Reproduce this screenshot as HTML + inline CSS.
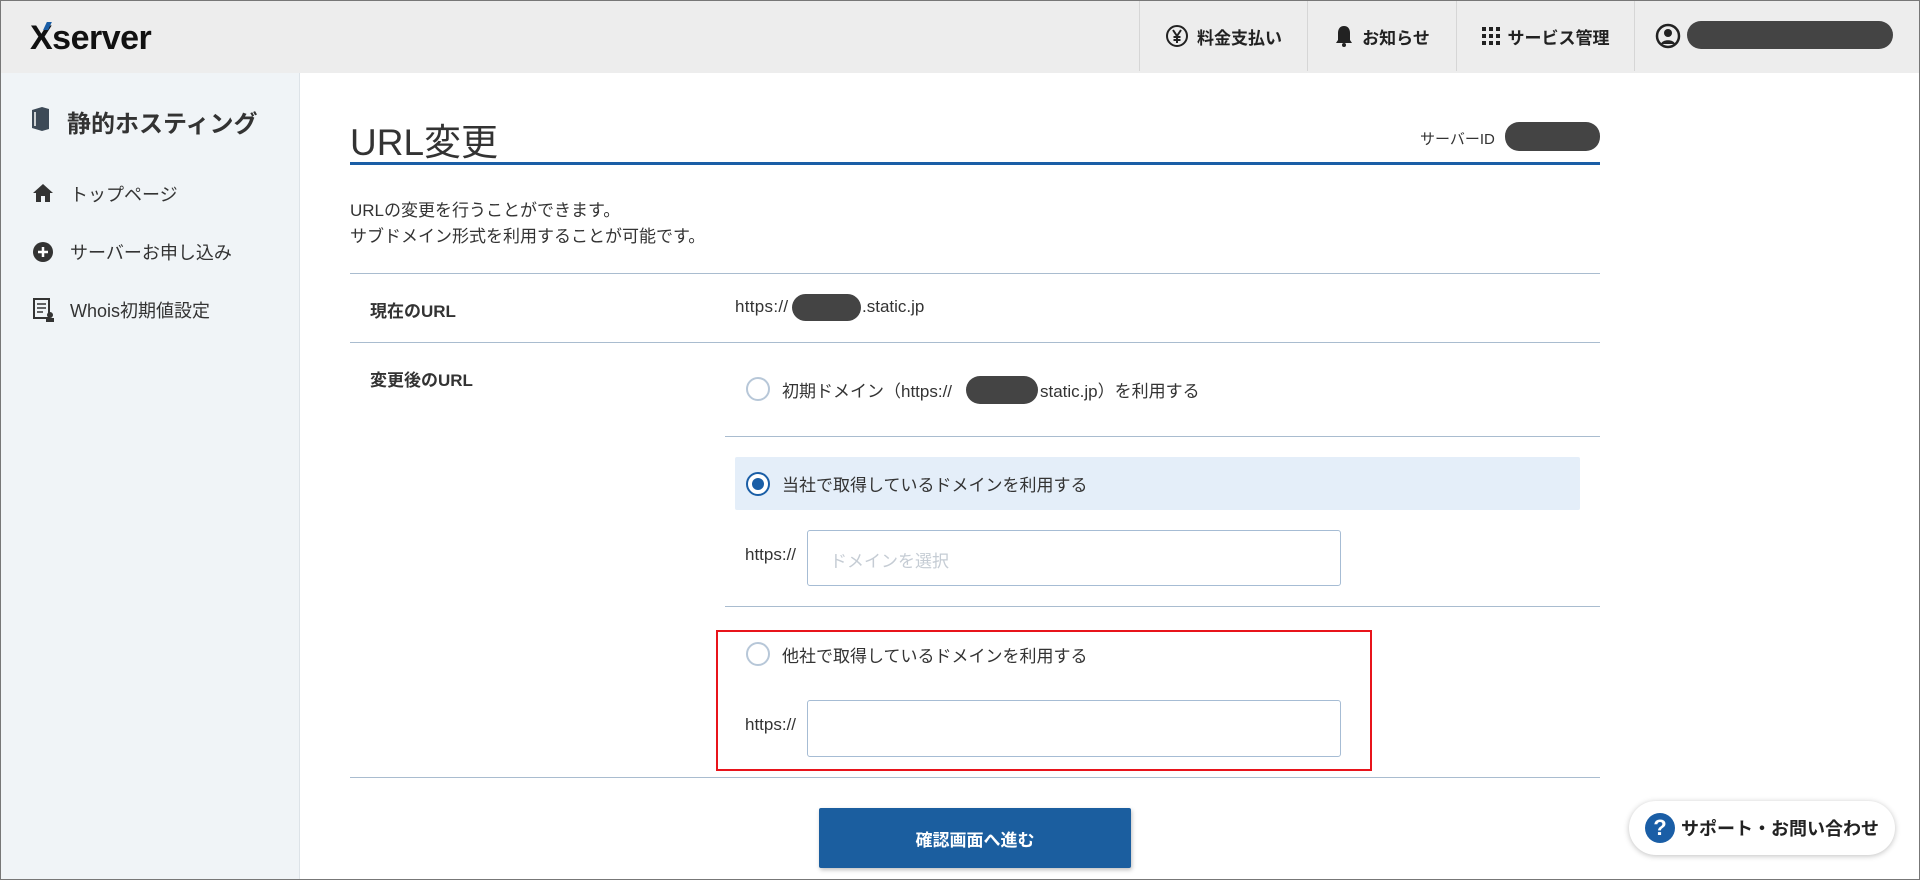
<!DOCTYPE html>
<html><head><meta charset="utf-8"><style>
*{box-sizing:border-box;margin:0;padding:0}
body{width:1920px;height:880px;position:relative;overflow:hidden;background:#fff;font-family:"Liberation Sans","Noto Sans CJK JP",sans-serif;color:#333}
.a{position:absolute}
.hdr{left:0;top:0;width:1920px;height:73px;background:#ededed;border:1px solid #777;border-bottom:none}
.nav{top:1px;height:70px;display:flex;align-items:center;justify-content:center;font-size:17px;font-weight:bold;color:#222;border-left:1px solid #d6d6d6}
.side{left:1px;top:73px;width:299px;height:807px;background:#f0f4f7;border-right:1px solid #dde3e8}
.mi{left:70px;font-size:18px;color:#333}
.pill{background:#444;border-radius:14px}
.line{height:1px;background:#a9bccf}
.radio{width:24px;height:24px;border:2px solid #b7c7d8;border-radius:50%;background:#fff}
.lbl{font-size:17px;color:#333}
.inp{border:1px solid #a6bcd4;border-radius:3px;background:#fff}
</style></head><body>
<div class="a hdr"></div>
<div class="a" style="left:30px;top:19px;font-size:34px;font-weight:bold;color:#111;letter-spacing:-0.5px">Xserver</div>
<div class="a" style="left:45px;top:22px;width:5px;height:8px;background:#1a5ea6;transform:skewX(-25deg)"></div>
<div class="a nav" style="left:1139px;width:168px"><svg width="24" height="24" viewBox="0 0 24 24" style="margin-right:8px"><circle cx="12" cy="12" r="10" fill="none" stroke="#222" stroke-width="2"/><path d="M8 6l4 6 4-6M12 12v7M8.5 13h7M8.5 16h7" stroke="#222" stroke-width="2" fill="none"/></svg>料金支払い</div>
<div class="a nav" style="left:1307px;width:149px"><svg width="20" height="24" viewBox="0 0 20 24" style="margin-right:8px"><path d="M10 2c-4 0-6 3-6 7v7l-2 3h16l-2-3V9c0-4-2-7-6-7z" fill="#222"/><circle cx="10" cy="21" r="2" fill="#222"/></svg>お知らせ</div>
<div class="a nav" style="left:1456px;width:178px"><svg width="18" height="18" viewBox="0 0 18 18" style="margin-right:8px" fill="#222"><rect x="0" y="0" width="4" height="4"/><rect x="7" y="0" width="4" height="4"/><rect x="14" y="0" width="4" height="4"/><rect x="0" y="7" width="4" height="4"/><rect x="7" y="7" width="4" height="4"/><rect x="14" y="7" width="4" height="4"/><rect x="0" y="14" width="4" height="4"/><rect x="7" y="14" width="4" height="4"/><rect x="14" y="14" width="4" height="4"/></svg>サービス管理</div>
<div class="a nav" style="left:1634px;width:285px;justify-content:flex-start;padding-left:20px"><svg width="26" height="26" viewBox="0 0 26 26"><circle cx="13" cy="13" r="11" fill="none" stroke="#222" stroke-width="2.5"/><circle cx="13" cy="10" r="4" fill="#222"/><path d="M6 21c1-5 13-5 14 0" fill="#222"/></svg></div>
<div class="a pill" style="left:1687px;top:21px;width:206px;height:28px"></div>

<div class="a side"></div>
<svg class="a" style="left:30px;top:106px" width="20" height="26" viewBox="0 0 20 26"><path d="M2 4l10-3 7 2v20l-7 2-10-3z" fill="#3d4a57"/><path d="M5 6v14" stroke="#fff" stroke-width="1.5"/></svg>
<div class="a" style="left:67px;top:104px;font-size:24px;font-weight:bold;color:#333">静的ホスティング</div>
<svg class="a" style="left:32px;top:182px" width="22" height="22" viewBox="0 0 22 22"><path d="M11 2L1 11h3v9h5v-6h4v6h5v-9h3z" fill="#333"/></svg>
<div class="a mi" style="top:181px">トップページ</div>
<svg class="a" style="left:32px;top:241px" width="22" height="22" viewBox="0 0 22 22"><circle cx="11" cy="11" r="10" fill="#333"/><path d="M11 6v10M6 11h10" stroke="#fff" stroke-width="2.5"/></svg>
<div class="a mi" style="top:239px">サーバーお申し込み</div>
<svg class="a" style="left:33px;top:298px" width="22" height="24" viewBox="0 0 22 24"><rect x="1" y="1" width="15" height="19" fill="none" stroke="#333" stroke-width="2"/><path d="M4 6h9M4 10h9M4 14h6" stroke="#333" stroke-width="1.5"/><circle cx="17" cy="17" r="3" fill="#333"/><rect x="13" y="20" width="8" height="4" fill="#333"/></svg>
<div class="a mi" style="top:297px">Whois初期値設定</div>

<div class="a" style="left:350px;top:112px;font-size:37px;color:#333">URL変更</div>
<div class="a" style="left:1420px;top:128px;font-size:15px;color:#333">サーバーID</div>
<div class="a pill" style="left:1505px;top:122px;width:95px;height:29px"></div>
<div class="a" style="left:350px;top:162px;width:1250px;height:3px;background:#1a5ea6"></div>
<div class="a" style="left:350px;top:198px;font-size:17px;line-height:26px;color:#333">URLの変更を行うことができます。<br>サブドメイン形式を利用することが可能です。</div>
<div class="a line" style="left:350px;top:273px;width:1250px"></div>
<div class="a" style="left:370px;top:297px;font-size:17px;font-weight:bold">現在のURL</div>
<div class="a lbl" style="left:735px;top:297px;letter-spacing:0.3px">https://</div>
<div class="a pill" style="left:792px;top:294px;width:69px;height:27px"></div>
<div class="a lbl" style="left:862px;top:297px">.static.jp</div>
<div class="a line" style="left:350px;top:342px;width:1250px"></div>
<div class="a" style="left:370px;top:366px;font-size:17px;font-weight:bold">変更後のURL</div>

<div class="a radio" style="left:746px;top:377px"></div>
<div class="a lbl" style="left:782px;top:377px">初期ドメイン（https://</div>
<div class="a pill" style="left:966px;top:376px;width:72px;height:28px"></div>
<div class="a lbl" style="left:1040px;top:377px">static.jp）を利用する</div>
<div class="a line" style="left:725px;top:436px;width:875px"></div>

<div class="a" style="left:735px;top:457px;width:845px;height:53px;background:#e4eef9;border-radius:2px"></div>
<div class="a radio" style="left:746px;top:472px;border-color:#1a5ea6"></div>
<div class="a" style="left:752px;top:478px;width:12px;height:12px;border-radius:50%;background:#1a5ea6"></div>
<div class="a lbl" style="left:782px;top:471px">当社で取得しているドメインを利用する</div>
<div class="a lbl" style="left:745px;top:545px">https://</div>
<div class="a inp" style="left:807px;top:530px;width:534px;height:56px"></div>
<div class="a" style="left:830px;top:547px;font-size:17px;color:#c5ccd4">ドメインを選択</div>
<div class="a line" style="left:725px;top:606px;width:875px"></div>

<div class="a" style="left:716px;top:630px;width:656px;height:141px;border:2px solid #e8141b"></div>
<div class="a radio" style="left:746px;top:642px"></div>
<div class="a lbl" style="left:782px;top:642px">他社で取得しているドメインを利用する</div>
<div class="a lbl" style="left:745px;top:715px">https://</div>
<div class="a inp" style="left:807px;top:700px;width:534px;height:57px"></div>
<div class="a line" style="left:350px;top:777px;width:1250px"></div>

<div class="a" style="left:819px;top:808px;width:312px;height:60px;background:#1b5e9f;border-radius:2px;box-shadow:1px 2px 4px rgba(0,0,0,.25);color:#fff;font-size:17px;font-weight:bold;display:flex;align-items:center;justify-content:center">確認画面へ進む</div>

<div class="a" style="left:1629px;top:801px;width:266px;height:54px;background:#fff;border-radius:27px;box-shadow:0 1px 6px rgba(0,0,0,.25);display:flex;align-items:center;padding-left:16px;font-size:18px;font-weight:bold;color:#222"><span style="width:30px;height:30px;border-radius:50%;background:#1a5ea6;color:#fff;display:inline-flex;align-items:center;justify-content:center;font-size:22px;margin-right:6px">?</span>サポート・お問い合わせ</div>
<div class="a" style="left:0;top:0;width:1920px;height:880px;border:1px solid #777;pointer-events:none"></div>
</body></html>
